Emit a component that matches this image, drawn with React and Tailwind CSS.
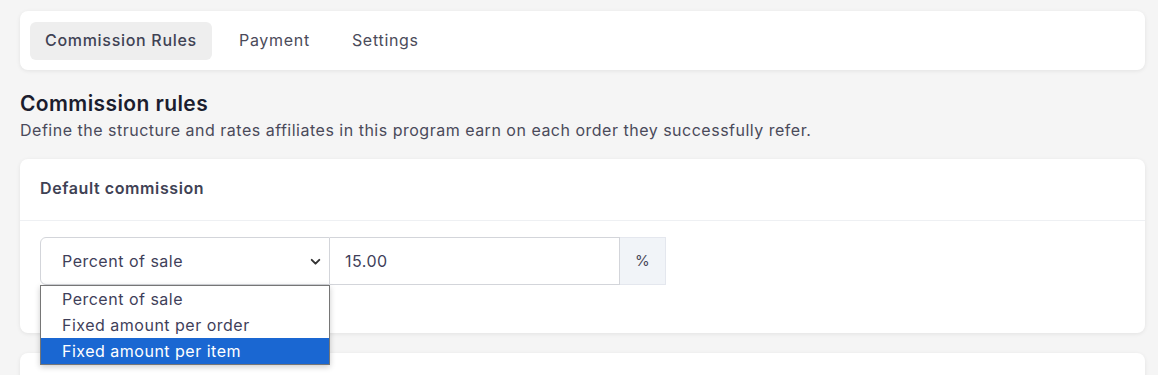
import React from "react";

export default function App() {
  const font = { fontFamily: "Inter, 'Noto Sans', sans-serif" };
  return (
    <div className="min-h-screen bg-[#f5f5f5] px-5 pt-[11px] pr-[13px] tracking-[0.5px]" style={font}>
      <div className="flex h-[59px] items-center gap-[12px] rounded-lg bg-white px-[10px] shadow-[0_1px_4px_rgba(0,0,0,0.08)]">
        <div className="flex h-[38px] w-[182px] items-center rounded-md bg-[#eeeeee] px-[15px] pb-[2px] text-[16px] font-medium tracking-[0.7px] text-[#3f4254]">
          Commission Rules
        </div>
        <div className="flex h-[38px] items-center px-[15px] pb-[2px] text-[16px] tracking-[0.7px] text-[#4b4b5a]">Payment</div>
        <div className="flex h-[38px] items-center px-[15px] pb-[2px] text-[16px] tracking-[0.7px] text-[#4b4b5a]">Settings</div>
      </div>

      <h2 className="mt-[20px] text-[21px] leading-[28px] font-semibold tracking-[0.4px] text-[#1b1d2e]">Commission rules</h2>
      <p className="text-[16px] leading-[24px] text-[#4a4a5a]">
        Define the structure and rates affiliates in this program earn on each order they successfully refer.
      </p>

      <div className="mt-[17px] rounded-lg bg-white shadow-[0_1px_4px_rgba(0,0,0,0.08)]">
        <div className="flex h-[62px] items-center border-b border-[#eef0f3] px-5 pb-[4px] text-[16px] font-semibold tracking-[0.6px] text-[#3f4254]">
          Default commission
        </div>
        <div className="px-5 pt-4 pb-12">
          <div className="relative flex h-12">
            <div className="flex w-[290px] items-center justify-between rounded-l-md border border-[#d3d5da] pl-[21px] pr-[7px] text-[16px] text-[#3f3f5a]">
              <span>Percent of sale</span>
              <svg width="13" height="13" viewBox="0 0 12 12" fill="none">
                <path d="M2.5 4.5L6 8L9.5 4.5" stroke="#333" strokeWidth="1.8" strokeLinecap="round" strokeLinejoin="round" />
              </svg>
            </div>
            <div className="flex w-[290px] items-center border-y border-r border-[#d3d5da] pl-[15px] text-[16px] text-[#3f3f5a]">
              15.00
            </div>
            <div className="flex w-[46px] items-center justify-center border-y border-r border-[#e4e7ee] bg-[#f1f4f8] text-[15px] text-[#4a4a5a]">
              %
            </div>

            <div className="absolute left-0 top-12 z-10 w-[290px] border border-[#767676] bg-white shadow-[0_2px_6px_rgba(0,0,0,0.2)]">
              <div className="flex h-[26px] items-center pl-[21px] text-[16px] text-[#3f3f5a]">Percent of sale</div>
              <div className="flex h-[26px] items-center pl-[21px] text-[16px] text-[#3f3f5a]">Fixed amount per order</div>
              <div className="flex h-[26px] items-center bg-[#1a67d2] pl-[21px] text-[16px] text-white">Fixed amount per item</div>
            </div>
          </div>
        </div>
      </div>

      <div className="mt-5 h-[60px] rounded-lg bg-white shadow-[0_1px_4px_rgba(0,0,0,0.08)]" />
    </div>
  );
}
